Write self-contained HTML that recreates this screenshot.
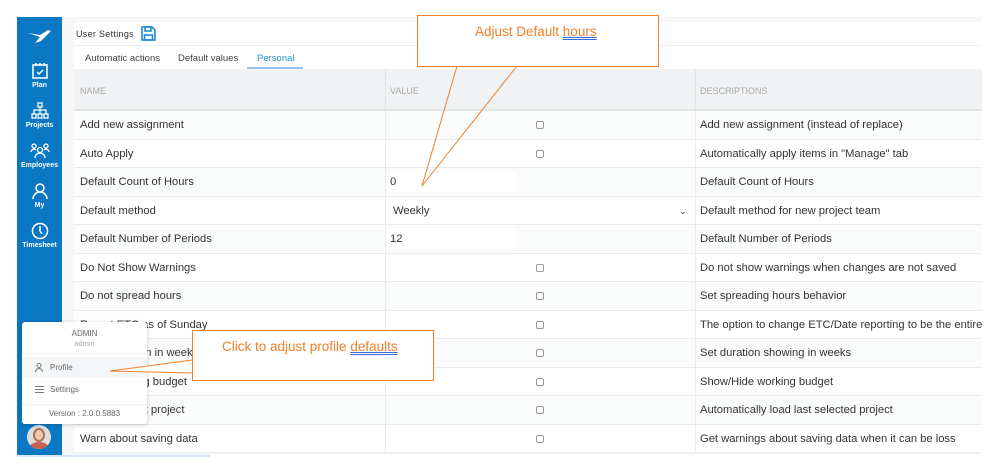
<!DOCTYPE html>
<html><head><meta charset="utf-8"><style>
*{margin:0;padding:0;box-sizing:border-box}
body{width:1004px;height:467px;background:#fff;position:relative;overflow:hidden;font-family:"Liberation Sans",Arial,sans-serif;color:#333}
.a{position:absolute}
#side{left:17px;top:17px;width:45px;height:438px;background:#0a78c2}
.nav{position:absolute;left:0;width:45px;text-align:center;color:#fff;font-size:7px;font-weight:bold}
#bg{left:62px;top:17px;width:920px;height:438px;background:#f7f7f7}
#panel{left:74px;top:22px;width:908px;height:431px;background:#fff}
.row{position:absolute;left:74px;width:908px;height:28.5px;border-bottom:1px solid #ebebeb;font-size:11.2px}
.row span{position:absolute;top:8px}
.cb{position:absolute;left:536px;top:10px;width:8px;height:8px;border:1px solid #999;border-radius:2px}
.co{color:#f07f2a;font-family:"Liberation Sans",sans-serif;font-size:13.5px}
.co u{text-decoration:underline double #3a6ad8}
</style></head><body>
<div class="a" id="side">
 <svg class="a" style="left:10px;top:10px" width="26" height="18" viewBox="0 0 26 18"><path d="M1 6 L13 8 L21 3 L24 4 L20 8 L14 14 L8 16 L13 10 Z" fill="#fff"/></svg>
 <div class="nav" style="top:45px"><svg width="18" height="18" viewBox="0 0 18 18" fill="none" stroke="#fff" stroke-width="1.5"><rect x="2" y="3" width="14" height="13"/><path d="M5 1v3M9 1v3M13 1v3M6 10l2 2 4-4"/></svg><div>Plan</div></div>
 <div class="nav" style="top:85px"><svg width="18" height="18" viewBox="0 0 18 18" fill="none" stroke="#fff" stroke-width="1.3"><rect x="7" y="1" width="4" height="4"/><rect x="1" y="12" width="4" height="4"/><rect x="7" y="12" width="4" height="4"/><rect x="13" y="12" width="4" height="4"/><path d="M9 5v7M3 12V8h12v4"/></svg><div>Projects</div></div>
 <div class="nav" style="top:125px"><svg width="20" height="18" viewBox="0 0 20 18" fill="none" stroke="#fff" stroke-width="1.3"><circle cx="4" cy="4" r="2"/><circle cx="16" cy="4" r="2"/><circle cx="10" cy="8" r="2.5"/><path d="M1 10a3 3 0 0 1 5-2M19 10a3 3 0 0 0-5-2M5 16a5 5 0 0 1 10 0"/></svg><div>Employees</div></div>
 <div class="nav" style="top:165px"><svg width="18" height="18" viewBox="0 0 18 18" fill="none" stroke="#fff" stroke-width="1.5"><circle cx="9" cy="6" r="4"/><path d="M2 17a7 7 0 0 1 14 0"/></svg><div>My</div></div>
 <div class="nav" style="top:205px"><svg width="18" height="18" viewBox="0 0 18 18" fill="none" stroke="#fff" stroke-width="1.5"><circle cx="9" cy="9" r="7.5"/><path d="M9 4v5l2 3"/></svg><div>Timesheet</div></div>
 <div class="a" style="left:10px;top:408px;width:24px;height:24px;border-radius:50%;background:#ddd;overflow:hidden"><div class="a" style="left:6px;top:3px;width:12px;height:14px;border-radius:50%;background:#b0705a"></div><div class="a" style="left:8px;top:5px;width:8px;height:10px;border-radius:50%;background:#f0c8b0"></div><div class="a" style="left:3px;top:17px;width:18px;height:10px;border-radius:50%;background:#c86050"></div></div>
</div>
<div class="a" style="left:17px;top:455px;width:193px;height:2px;background:#dbe9f6"></div>
<div class="a" id="bg"></div>
<div class="a" id="panel"></div>
<div class="a" style="left:76px;top:29px;font-size:9px;color:#333;letter-spacing:.3px">User Settings</div>
<svg class="a" style="left:141px;top:26px" width="15" height="15" viewBox="0 0 15 15" fill="none" stroke="#1a8ad4" stroke-width="1.6"><path d="M1 1h10l3 3v10H1z"/><rect x="4" y="1" width="6" height="4"/><rect x="3.5" y="9" width="8" height="5"/></svg>
<div class="a" style="left:74px;top:45px;width:908px;height:1px;background:#eee"></div>
<div class="a" style="left:85px;top:53px;font-size:9.5px;color:#444">Automatic actions</div>
<div class="a" style="left:178px;top:53px;font-size:9.5px;color:#444">Default values</div>
<div class="a" style="left:257px;top:53px;font-size:9.5px;color:#2a8fd0">Personal</div>
<div class="a" style="left:247px;top:67px;width:56px;height:2px;background:#8fc4e8"></div>
<div class="a" style="left:74px;top:69px;width:908px;height:42px;background:#f0f2f4;border-bottom:2px solid #e2e4e6;font-size:9px;color:#aaa">
 <span class="a" style="left:6px;top:17px">NAME</span><span class="a" style="left:316px;top:17px">VALUE</span><span class="a" style="left:626px;top:17px">DESCRIPTIONS</span>
 <div class="a" style="left:311px;top:0;width:1px;height:42px;background:#e2e4e6"></div><div class="a" style="left:621px;top:0;width:1px;height:42px;background:#e2e4e6"></div>
</div>
<div class="a" style="left:385px;top:111px;width:1px;height:342px;background:#ebebeb;z-index:2"></div>
<div class="a" style="left:695px;top:111px;width:1px;height:342px;background:#ebebeb;z-index:2"></div>

<div class="row" style="top:111px;background:#fafbfb"><span style="left:6px">Add new assignment</span><i class="cb" style="left:462px"></i><span style="left:626px">Add new assignment (instead of replace)</span></div>
<div class="row" style="top:139.5px"><span style="left:6px">Auto Apply</span><i class="cb" style="left:462px"></i><span style="left:626px">Automatically apply items in "Manage" tab</span></div>
<div class="row" style="top:168px;background:#fafbfb"><span style="left:6px">Default Count of Hours</span><div class="a" style="left:312px;top:4px;width:130px;height:20px;background:#fff"></div><span style="left:316px">0</span><span style="left:626px">Default Count of Hours</span></div>
<div class="row" style="top:196.5px"><span style="left:6px">Default method</span><span style="left:319px">Weekly</span><span style="left:605px;font-size:9px;top:9px">&#8964;</span><span style="left:626px">Default method for new project team</span></div>
<div class="row" style="top:225px;background:#fafbfb"><span style="left:6px">Default Number of Periods</span><div class="a" style="left:312px;top:4px;width:130px;height:20px;background:#fff"></div><span style="left:316px">12</span><span style="left:626px">Default Number of Periods</span></div>
<div class="row" style="top:253.5px"><span style="left:6px">Do Not Show Warnings</span><i class="cb" style="left:462px"></i><span style="left:626px">Do not show warnings when changes are not saved</span></div>
<div class="row" style="top:282px;background:#fafbfb"><span style="left:6px">Do not spread hours</span><i class="cb" style="left:462px"></i><span style="left:626px">Set spreading hours behavior</span></div>
<div class="row" style="top:310.5px"><span style="left:6px">Report ETC as of Sunday</span><i class="cb" style="left:462px"></i><span style="left:626px;white-space:nowrap;width:282px;overflow:hidden">The option to change ETC/Date reporting to be the entire week</span></div>
<div class="row" style="top:339px;background:#fafbfb"><span style="left:6px">Show duration in weeks</span><i class="cb" style="left:462px"></i><span style="left:626px">Set duration showing in weeks</span></div>
<div class="row" style="top:367.5px"><span style="left:6px">Show working budget</span><i class="cb" style="left:462px"></i><span style="left:626px">Show/Hide working budget</span></div>
<div class="row" style="top:396px;background:#fafbfb"><span style="left:6px">Auto load last project</span><i class="cb" style="left:462px"></i><span style="left:626px">Automatically load last selected project</span></div>
<div class="row" style="top:424.5px"><span style="left:6px">Warn about saving data</span><i class="cb" style="left:462px"></i><span style="left:626px">Get warnings about saving data when it can be loss</span></div>

<div class="a" style="left:22px;top:322px;width:125px;height:102px;background:#fff;box-shadow:0 1px 5px rgba(0,0,0,.2);border-radius:3px;z-index:5;font-size:8px;color:#666">
 <div class="a" style="left:0;top:7px;width:125px;text-align:center">ADMIN</div>
 <div class="a" style="left:0;top:17px;width:125px;text-align:center;color:#aaa;font-size:7.5px">admin</div>
 <div class="a" style="left:0;top:31px;width:125px;height:1px;background:#eee"></div>
 <div class="a" style="left:0;top:35px;width:125px;height:21px;background:#f4f6f8"></div>
 <svg class="a" style="left:13px;top:41px" width="8" height="9" viewBox="0 0 8 9" fill="none" stroke="#777"><circle cx="4" cy="2.5" r="2"/><path d="M0.5 9a3.5 3.5 0 0 1 7 0"/></svg>
 <div class="a" style="left:28px;top:41px">Profile</div>
 <svg class="a" style="left:13px;top:63px" width="9" height="9" viewBox="0 0 9 9" fill="none" stroke="#777"><path d="M0 1.5h9M0 4.5h9M0 7.5h9"/></svg>
 <div class="a" style="left:28px;top:63px">Settings</div>
 <div class="a" style="left:0;top:82px;width:125px;height:1px;background:#eee"></div>
 <div class="a" style="left:0;top:87px;width:125px;text-align:center">Version : 2.0.0.5883</div>
</div>

<svg class="a" style="left:0;top:0;z-index:6" width="1004" height="467">
 <rect x="417.5" y="15.5" width="241" height="51" fill="#fff" stroke="#f07f2a"/>
 <path d="M457 66 L422 186 M517 66 L422 186" stroke="#f07f2a" fill="none"/>
 <rect x="192.5" y="330.5" width="241" height="50" fill="#fff" stroke="#f07f2a"/>
 <path d="M192 360 L110 371 L192 373" stroke="#f07f2a" fill="#fff"/>
</svg>
<div class="a co" style="left:475px;top:24px;z-index:7">Adjust Default <u>hours</u></div>
<div class="a co" style="left:222px;top:339px;z-index:7">Click to adjust profile <u>defaults</u></div>
</body></html>
